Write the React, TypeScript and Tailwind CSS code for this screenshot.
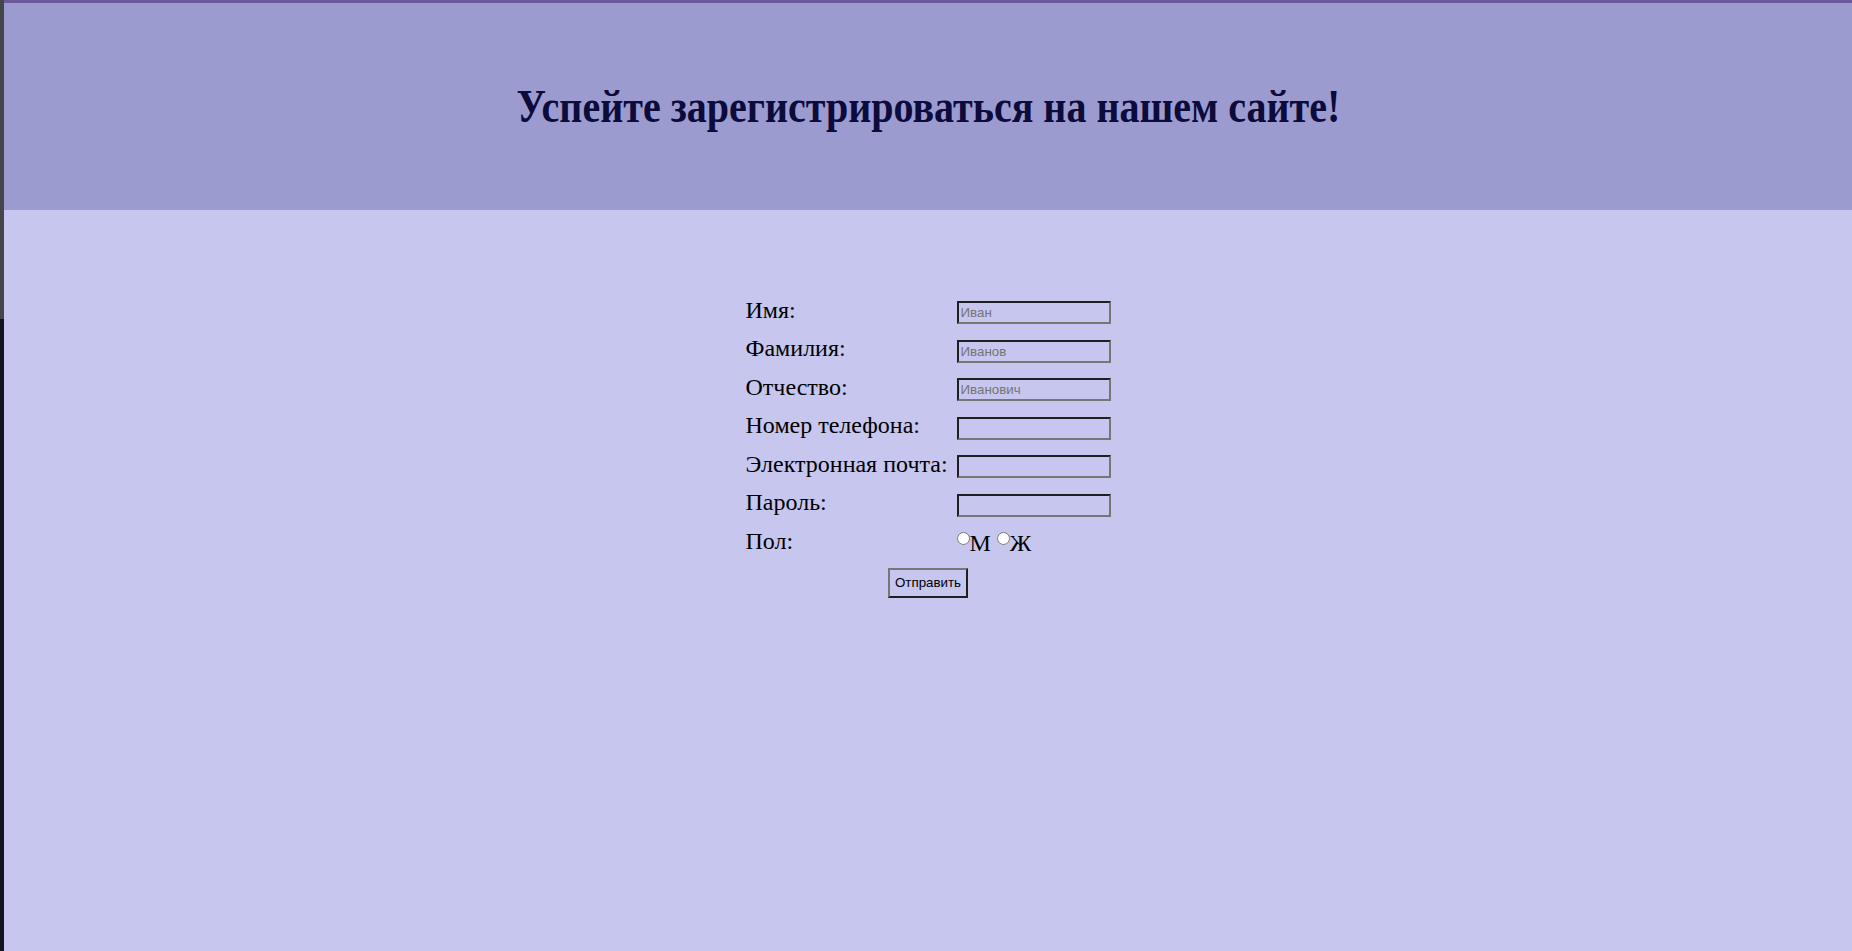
import { useState } from "react";

const fields = [
  { label: "Имя:", placeholder: "Иван", type: "text" },
  { label: "Фамилия:", placeholder: "Иванов", type: "text" },
  { label: "Отчество:", placeholder: "Иванович", type: "text" },
  { label: "Номер телефона:", placeholder: "", type: "tel" },
  { label: "Электронная почта:", placeholder: "", type: "email" },
  { label: "Пароль:", placeholder: "", type: "password" },
];

export default function App() {
  const [sex, setSex] = useState("");

  return (
    <div className="flex h-[951px] overflow-hidden">
      {/* left edge of the window */}
      <div className="w-[4px] flex flex-col">
        <div className="h-[319px] bg-[#45454d]" />
        <div className="flex-1 bg-[#12151f]" />
      </div>

      <div className="flex-1 flex flex-col bg-[#c6c6ef]">
        <div className="h-[3px] bg-[#6b5a9b]" />
        <header className="h-[207px] bg-[#9b9bd0] flex items-center justify-center">
          <h1 className="font-['Liberation_Serif',serif] font-bold text-[46px] text-[#0b0b3c] leading-none whitespace-nowrap scale-x-[0.87]">
            Успейте зарегистрироваться на нашем сайте!
          </h1>
        </header>

        <main className="flex justify-center pt-[87.5px]">
          <form className="w-[365px] font-['Liberation_Serif',serif] text-black" onSubmit={(e) => e.preventDefault()}>
            {fields.map((f) => (
              <div key={f.label} className="flex h-[38.5px]">
                <label className="w-[211px] text-[24px] leading-[24px]">{f.label}</label>
                <input
                  type={f.type}
                  placeholder={f.placeholder}
                  className="mt-[3.5px] w-[154px] h-[23px] px-[2px] bg-transparent border-2 border-t-[#1f1f1f] border-l-[#1f1f1f] border-r-[#767676] border-b-[#767676] font-['Liberation_Sans',sans-serif] text-[13.33px] placeholder:text-[#757575] outline-none"
                />
              </div>
            ))}

            <div className="flex h-[39.5px]">
              <span className="w-[211px] text-[24px] leading-[24px]">Пол:</span>
              <div className="flex items-start text-[24px] leading-[24px]">
                <input
                  type="radio"
                  name="sex"
                  checked={sex === "m"}
                  onChange={() => setSex("m")}
                  className="mt-[3px] w-[13px] h-[13px] m-0"
                />
                <span className="mt-[2px]">М</span>
                <span className="w-[6px]" />
                <input
                  type="radio"
                  name="sex"
                  checked={sex === "f"}
                  onChange={() => setSex("f")}
                  className="mt-[3px] w-[13px] h-[13px] m-0"
                />
                <span className="mt-[2px]">Ж</span>
              </div>
            </div>

            <div className="flex justify-center">
              <button
                type="submit"
                className="w-[80px] h-[30px] border-2 border-t-[#767676] border-l-[#767676] border-r-[#1f1f1f] border-b-[#1f1f1f] bg-transparent font-['Liberation_Sans',sans-serif] text-[13.33px] text-black"
              >
                Отправить
              </button>
            </div>
          </form>
        </main>
      </div>
    </div>
  );
}
